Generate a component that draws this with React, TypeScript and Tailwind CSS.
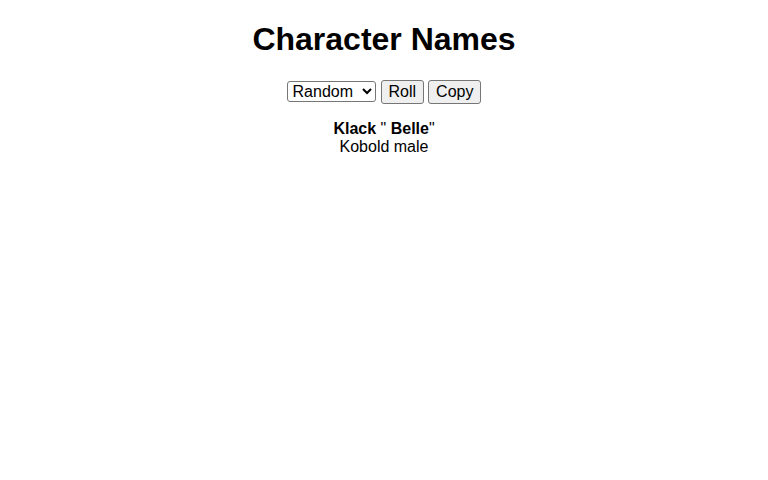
import React, { useState } from "react";

const first = ["Klack", "Grix", "Snark", "Mipp"];
const last = ["Belle", "Tok", "Rusk", "Vell"];

const App = () => {
  const [name, setName] = useState({ first: "Klack", last: "Belle", kind: "Kobold male" });

  const roll = () => {
    setName({
      first: first[Math.floor(Math.random() * first.length)],
      last: last[Math.floor(Math.random() * last.length)],
      kind: "Kobold male",
    });
  };

  return (
    <div className="min-h-[480px] bg-white text-black text-center font-['Liberation_Sans',Arial,sans-serif] text-[16px]">
      <h1 className="pt-[21.44px] pb-[21.44px] text-[32px] font-bold leading-[36.8px]">Character Names</h1>

      {/* Controls */}
      <div className="flex justify-center items-center h-[24px]">
        <select className="w-[89px] h-[21px] mr-[5px] border border-[#767676] rounded-[3px] bg-white pl-[1px] pr-[4px] text-[16px] leading-none">
          <option>Random</option>
          <option>Kobold</option>
          <option>Goblin</option>
        </select>
        <button
          onClick={roll}
          className="h-[24px] mr-[4px] px-[7px] border border-[#767676] rounded-[3px] bg-[#efefef] text-[16px] leading-[18px]"
        >
          Roll
        </button>
        <button className="h-[24px] px-[7px] border border-[#767676] rounded-[3px] bg-[#efefef] text-[16px] leading-[18px]">
          Copy
        </button>
      </div>

      {/* Result */}
      <p className="mt-[16px] leading-[18.4px]">
        <b>{name.first}</b> " <b>{name.last}</b>"
        <br />
        {name.kind}
      </p>
    </div>
  );
};

export default App;
